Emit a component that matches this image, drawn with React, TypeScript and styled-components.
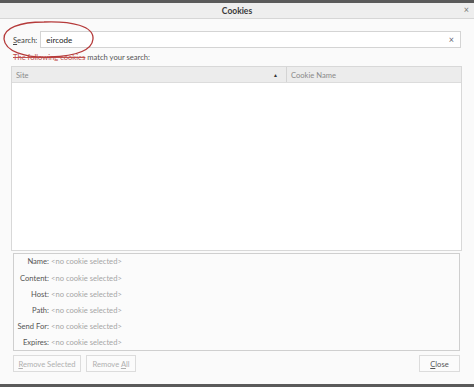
import { Fragment } from 'react';
import styled, { createGlobalStyle } from 'styled-components';

const Global = createGlobalStyle`
  html, body {
    margin: 0;
    padding: 0;
    background: #fafafa;
  }
  body {
    font-family: Lato, "Open Sans", sans-serif;
  }
`;

const Window = styled.div`
  position: relative;
  width: 474px;
  height: 387px;
  display: flex;
  flex-direction: column;
  background: #fafafa;
  overflow: hidden;
`;

const EdgeBar = styled.div`
  height: 3px;
  background: #5a5a5a;
  flex: none;
`;

const TitleBar = styled.div`
  height: 15px;
  display: flex;
  align-items: center;
  justify-content: center;
  position: relative;
  background: #eeeeee;
  border-bottom: 1px solid #d6d6d6;
  font-size: 8.5px;
  font-weight: 700;
  color: #3a3a3a;
  flex: none;
`;

const CloseX = styled.span`
  position: absolute;
  right: 5px;
  top: 1px;
  font-size: 9px;
  font-weight: 400;
  color: #777;
`;

const Body = styled.div`
  flex: 1;
  display: flex;
  flex-direction: column;
  padding: 12px 12px 0 11px;
  font-size: 7.6px;
`;

const SearchRow = styled.div`
  display: flex;
  align-items: center;
  gap: 3px;
  padding-left: 2px;
  height: 17px;
`;

const Label = styled.span`
  color: #444;
`;

const U = styled.span`
  text-decoration: underline;
`;

const SearchBox = styled.div`
  flex: 1;
  height: 15px;
  display: flex;
  align-items: center;
  justify-content: space-between;
  background: #fff;
  border: 1px solid #d4d4d4;
  padding: 0 6px 0 5px;
  font-size: 8px;
  color: #222;
  margin-right: 1px;
`;

const Clear = styled.span`
  font-size: 9px;
  color: #667;
`;

const Hint = styled.div`
  color: #555;
  padding-left: 2px;
  margin-top: 2px;
  height: 14px;
  line-height: 14px;
`;

const Red = styled.span`
  color: #c0504d;
  text-decoration: line-through;
`;

const Table = styled.div`
  height: 185px;
  display: flex;
  flex-direction: column;
  border: 1px solid #d8d8d8;
  background: #fff;
  box-sizing: border-box;
  margin-top: 2px;
`;

const Header = styled.div`
  height: 15px;
  display: flex;
  align-items: center;
  background: #ececec;
  border-bottom: 1px solid #dcdcdc;
  color: #8a8a8a;
`;

const HeadCell = styled.div<{ $w?: number }>`
  box-sizing: border-box;
  display: flex;
  align-items: center;
  justify-content: space-between;
  height: 100%;
  padding: 0 4px;
  ${(p) => (p.$w ? `width: ${p.$w}px; flex: none;` : 'flex: 1;')}
  & + & {
    border-left: 1px solid #d4d4d4;
  }
`;

const Arrow = styled.span`
  font-size: 5px;
  color: #333;
  margin-right: 4px;
`;

const Details = styled.div`
  margin: 2px 2px 0 2px;
  height: 98px;
  box-sizing: border-box;
  border: 1px solid #cfcfcf;
  background: #fbfbfb;
  display: grid;
  grid-template-columns: 35px 1fr;
  grid-auto-rows: 16.2px;
  align-content: center;
  column-gap: 2px;
`;

const Key = styled.div`
  text-align: right;
  color: #555;
  line-height: 16px;
`;

const Val = styled.div`
  color: #a6a6a6;
  line-height: 16px;
`;

const Buttons = styled.div`
  display: flex;
  align-items: center;
  gap: 5px;
  margin: 4px 2px 0 2px;
`;

const Btn = styled.button<{ $disabled?: boolean; $w: number }>`
  width: ${(p) => p.$w}px;
  height: 17px;
  padding: 0;
  font-family: inherit;
  font-size: 7.6px;
  background: #fbfbfb;
  border: 1px solid #dcdcdc;
  color: ${(p) => (p.$disabled ? '#b0b0b0' : '#555')};
`;

const Spacer = styled.div`
  flex: 1;
`;

const Circle = styled.svg`
  position: absolute;
  left: 0;
  top: 0;
  pointer-events: none;
`;

const rows = ['Name:', 'Content:', 'Host:', 'Path:', 'Send For:', 'Expires:'];

export default function App() {
  return (
    <Window>
      <Global />
      <EdgeBar />
      <TitleBar>
        Cookies
        <CloseX>×</CloseX>
      </TitleBar>
      <Body>
        <SearchRow>
          <Label>
            <U>S</U>earch:
          </Label>
          <SearchBox>
            eircode
            <Clear>×</Clear>
          </SearchBox>
        </SearchRow>
        <Hint>
          <Red>The following cookies</Red> match your search:
        </Hint>
        <Table>
          <Header>
            <HeadCell $w={274}>
              Site
              <Arrow>▲</Arrow>
            </HeadCell>
            <HeadCell>Cookie Name</HeadCell>
          </Header>
        </Table>
        <Details>
          {rows.map((r) => (
            <Fragment key={r}>
              <Key>{r}</Key>
              <Val>&lt;no cookie selected&gt;</Val>
            </Fragment>
          ))}
        </Details>
        <Buttons>
          <Btn $disabled $w={68}>
            <U>R</U>emove Selected
          </Btn>
          <Btn $disabled $w={50}>
            Remove <U>A</U>ll
          </Btn>
          <Spacer />
          <Btn $w={41}>
            <U>C</U>lose
          </Btn>
        </Buttons>
      </Body>
      <EdgeBar />
      <Circle width="474" height="387" viewBox="0 0 474 387">
        <path
          d="M 44 22 C 72 21, 94 26, 93 39 C 92 51, 76 56, 50 57 C 24 58, 5 51, 4 39 C 3 28, 20 22, 44 22 Z"
          fill="none"
          stroke="#b53a3a"
          strokeWidth="1.3"
        />
      </Circle>
    </Window>
  );
}
